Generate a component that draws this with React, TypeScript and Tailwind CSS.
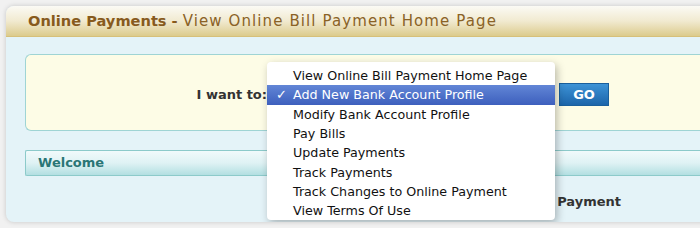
import React from "react";

const options = [
  "View Online Bill Payment Home Page",
  "Add New Bank Account Profile",
  "Modify Bank Account Profile",
  "Pay Bills",
  "Update Payments",
  "Track Payments",
  "Track Changes to Online Payment",
  "View Terms Of Use",
];

const selected = 1;

function ActionMenu() {
  return (
    <div className="absolute left-0 top-[-21px] z-10 w-[288px] rounded-[4px] bg-white pt-[4px] shadow-[2px_3px_8px_rgba(0,0,0,0.28)]">
      {options.map((label, i) => (
        <div
          key={label}
          className={
            i === selected
              ? "flex h-[19.3px] items-center bg-gradient-to-b from-[#6286d6] to-[#3d5fbd] text-white"
              : "flex h-[19.3px] items-center text-[#111]"
          }
        >
          <span className="w-[26px] pl-[9px] text-[13px]">{i === selected ? "✓" : ""}</span>
          <span className="whitespace-nowrap text-[12.7px]">{label}</span>
        </div>
      ))}
    </div>
  );
}

export default function App() {
  return (
    <div className="h-[228px] w-[700px] overflow-hidden bg-[#f1f1f1] pl-[6px] pt-[6px] [font-family:'DejaVu_Sans',Verdana,sans-serif]">
      <div className="h-[216px] w-[720px] overflow-hidden rounded-l-[8px] bg-[#e4f3f8] shadow-[0_0_5px_rgba(0,0,0,0.18)]">
        {/* header */}
        <div className="flex h-[31px] items-center border-b border-[#d6c07a] bg-gradient-to-b from-[#fbfaf5] via-[#f1ead0] to-[#dccb8c] pl-[22px] text-[#8a6226]">
          <span className="text-[14.6px] font-bold text-[#875a1d]">Online Payments -</span>
          <span className="ml-[5px] text-[15px] tracking-[1.1px]">View Online Bill Payment Home Page</span>
        </div>

        <div className="pl-[19px] pt-[17px]">
          {/* chooser */}
          <div className="h-[77px] rounded-l-[6px] border border-r-0 border-[#9fd4d4] bg-[#fdfce6] pt-[28px]">
            <div className="flex h-[23px] items-center">
              <div className="w-[241px] text-right text-[13px] font-bold text-[#333]">I want to:</div>
              <div className="relative h-[23px] w-[288px] shrink-0">
                <ActionMenu />
              </div>
              <button
                type="button"
                className="ml-[4px] h-[23px] w-[50px] border border-[#1a5f9c] bg-gradient-to-b from-[#3d93d6] to-[#1c65aa] text-[13px] font-bold text-white"
              >
                GO
              </button>
            </div>
          </div>

          {/* welcome bar */}
          <div className="mt-[19px] flex h-[26px] items-center rounded-l-[2px] border border-r-0 border-[#8ccaca] bg-gradient-to-b from-[#f1fafb] via-[#dff2f4] to-[#b2dfe2] pl-[12px] text-[13px] font-bold text-[#2a7676]">
            Welcome
          </div>

          <div className="mt-[16px] w-[596px] text-right text-[13px] font-bold text-[#333]">
            Payment
          </div>
        </div>
      </div>
    </div>
  );
}
